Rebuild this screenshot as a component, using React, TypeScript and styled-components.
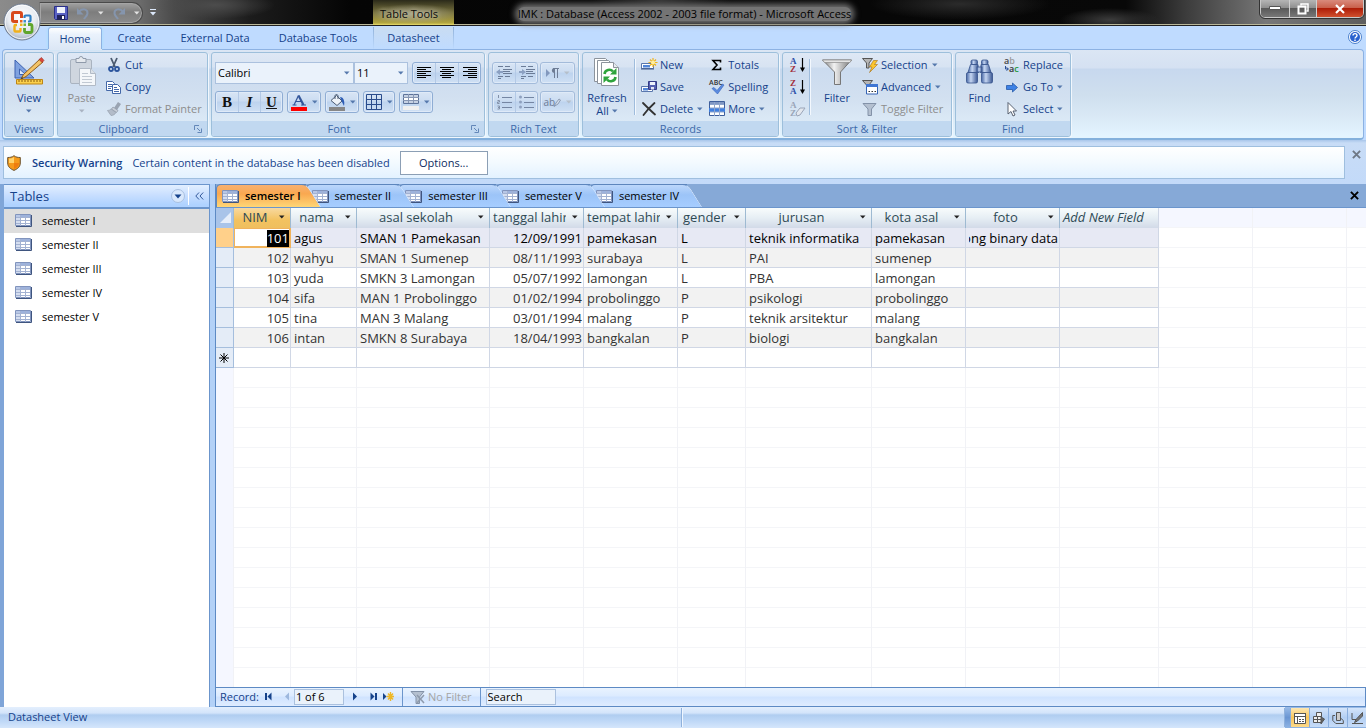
import React from "react";
import styled, { createGlobalStyle, css } from "styled-components";

const ink = "#15428b";
const faded = "#8d8d8d";

const GlobalStyle = createGlobalStyle`
  *, *::before, *::after { box-sizing: border-box; }
  html, body { margin: 0; padding: 0; }
  body, button, input, select { font-family: "Open Sans", "Noto Sans", sans-serif; font-size: 11px; line-height: 16px; }
  button { border: 0; background: none; padding: 0; margin: 0; color: ${ink}; cursor: default; white-space: nowrap; }
  svg { display: block; flex: none; overflow: visible; }
`;

/* ---------- window frame ---------- */

const Window = styled.div`
  display: flex;
  flex-direction: column;
  min-height: 100vh;
  background: #bfdbff;
  color: ${ink};
`;

const TitleBar = styled.header`
  position: relative;
  display: flex;
  height: 26px;
  border-bottom: 1px solid #222;
  box-shadow: inset 0 -1px 0 #b9b79a;
  background:
    radial-gradient(ellipse 60px 14px at 215px 5px, #4c4c4c, transparent),
    radial-gradient(ellipse 70px 16px at 660px 0, #303030, transparent),
    radial-gradient(ellipse 90px 16px at 960px 4px, #2b2b2b, transparent),
    radial-gradient(ellipse 50px 12px at 1110px 20px, #3c3c3c, transparent),
    linear-gradient(90deg, #8b8b8b 0, #6b6b6b 140px, #4a4a4a 175px, #1c1c1c 250px, #050505 350px, #080808 calc(100% - 240px), #3c3c3c calc(100% - 180px), #777 calc(100% - 100px), #5e5e5e 100%);
`;

const OfficeButton = styled.button`
  position: absolute;
  z-index: 3;
  left: 3px;
  top: 3px;
`;

const QuickAccess = styled.div`
  display: flex;
  align-items: center;
  gap: 8px;
  width: 104px;
  height: 22px;
  margin: 2px 0 0 39px;
  padding-left: 14px;
  border: 1px solid #4a4a4a;
  border-left-color: #777;
  border-radius: 0 11px 11px 0;
  background: linear-gradient(#a1a1a1, #7d7d7d 45%, #8c8c8c);
  box-shadow: inset 0 0 0 1px #a5a5a5;
`;

const Customize = styled.button`
  width: 20px;
  height: 24px;
  display: flex;
  align-items: center;
  justify-content: center;
`;

const ContextTitle = styled.div`
  position: absolute;
  left: 373px;
  top: 0;
  width: 81px;
  height: 25px;
  padding: 6px 0 0 7px;
  color: #0a0a0a;
  text-shadow: 0 0 5px #d6d2b8;
  background: radial-gradient(ellipse 44px 10px at 40px 14px, #a8a48a, transparent), linear-gradient(#2b2a1a, #77713c 50%, #b3a640 92%, #e9dd6d);
`;

const WindowTitle = styled.h1`
  position: absolute;
  left: 0;
  right: 0;
  top: 6px;
  margin: 0 0 0 3px;
  font-size: 11px;
  line-height: 16px;
  font-weight: 400;
  text-align: center;
  color: #000;
  pointer-events: none;
  span {
    display: inline-block;
    height: 14px;
    line-height: 14px;
    border-radius: 6px;
    background: #747474;
    box-shadow: 0 0 6px 3px #747474;
  }
`;

const WindowButtons = styled.div`
  display: flex;
  height: 18px;
  margin: 0 2px 0 auto;
  border: 1px solid #c9c9c9;
  border-top: 0;
  border-radius: 0 0 5px 5px;
  overflow: hidden;
  outline: 1px solid #333;
  z-index: 1;
`;

const WindowButton = styled.button<{ $w: number; $close?: boolean }>`
  display: flex;
  align-items: center;
  justify-content: center;
  width: ${(p) => p.$w}px;
  background: ${(p) => (p.$close ? "linear-gradient(#d98a7c, #c9604c 45%, #ae1d08 50%, #d0502d)" : "linear-gradient(#b5b5b5, #909090 45%, #5a5a5a 50%, #777)")};
  & + & { border-left: 1px solid #d0d0d0; }
`;

/* ---------- ribbon ---------- */

const Tabs = styled.nav`
  display: flex;
  align-items: flex-end;
  height: 23px;
  padding: 0 4px 0 48px;
`;

const RibbonTab = styled.button<{ $w: number; $active?: boolean; $context?: boolean }>`
  width: ${(p) => p.$w}px;
  height: 22px;
  position: relative;
  ${(p) =>
    p.$active &&
    css`
      z-index: 2;
      border: 1px solid #8db2e3;
      border-bottom: 0;
      border-radius: 3px 3px 0 0;
      background: linear-gradient(#fff, #eaf2fc 30%, #dce7f5);
      box-shadow: 0 1px 0 #dce7f5, 0 0 3px #9fe0ff;
    `}
  ${(p) =>
    p.$context &&
    css`
      border: solid;
      border-width: 0 1px;
      border-image: linear-gradient(#8fb0d8, #bfdbff) 1;
      background: linear-gradient(#c9dcf2, #bfdbff);
    `}
`;

const HelpButton = styled.button`
  margin: 0 0 5px auto;
`;

const Ribbon = styled.section`
  display: flex;
  gap: 3px;
  height: 91px;
  margin: 0 2px;
  padding: 2px 1px 3px;
  border: 1px solid #8db2e3;
  border-bottom: 2px solid #83b0dc;
  border-radius: 4px;
  background: linear-gradient(#dbe6f4 0, #d5e1f2 18px, #c7d8ee 19px, #cfdfee 45px, #d9e8f5 65px, #e3f4ff 86px);
`;

const GroupBox = styled.section<{ $w: number }>`
  display: flex;
  flex-direction: column;
  width: ${(p) => p.$w}px;
  height: 85px;
  flex: none;
  border: 1px solid #9dbfdb;
  border-radius: 3px;
  overflow: hidden;
  background: linear-gradient(#dee8f5 0, #d7e3f2 14px, #cbdbef 15px, #d2e0f0 45px, #dbe9f6 68px);
  box-shadow: 1px 1px 0 #f1f7fd;
`;

const GroupBody = styled.div`
  display: flex;
  height: 68px;
`;

const GroupLabel = styled.div`
  display: flex;
  align-items: center;
  height: 15px;
  background: #c1d8f0;
  color: #3e6aaa;
  span { flex: 1; text-align: center; line-height: 15px; }
  button { width: 18px; height: 15px; display: flex; align-items: center; justify-content: center; }
`;

const BigButton = styled.button<{ $w: number }>`
  display: flex;
  flex-direction: column;
  align-items: center;
  width: ${(p) => p.$w}px;
  padding-top: 4px;
  line-height: 13px;
  color: ${ink};
  &:disabled { color: ${faded}; }
  svg.big { margin-bottom: 5px; }
`;

const BigLine = styled.span`
  display: flex;
  align-items: center;
  gap: 3px;
  height: 13px;
`;

const Stack = styled.div<{ $left?: number }>`
  display: flex;
  flex-direction: column;
  align-items: flex-start;
  padding: 1px 0 0 ${(p) => p.$left || 0}px;
`;

const SmallButton = styled.button`
  display: flex;
  align-items: center;
  gap: 3px;
  height: 22px;
  &:disabled { color: ${faded}; }
  svg:last-child { margin-left: 1px; }
`;

const Divider = styled.div`
  width: 2px;
  height: 56px;
  margin: 6px 5px 0 3px;
  background: linear-gradient(90deg, #9fbcdc 50%, #f3f8fe 50%);
`;

const ToolRows = styled.div`
  display: flex;
  flex-direction: column;
  gap: 7px;
  padding: 9px 3px 0;
`;

const ToolRow = styled.div<{ $gap: number }>`
  display: flex;
  gap: ${(p) => p.$gap}px;
`;

const Pick = styled.label<{ $w: number }>`
  display: grid;
  width: ${(p) => p.$w}px;
  height: 22px;
  & + & { margin-left: -4px; }
  select, svg { grid-area: 1 / 1; }
  select {
    appearance: none;
    width: 100%;
    height: 22px;
    padding: 0 2px;
    border: 1px solid #abc1de;
    border-radius: 0;
    background: #eaf2fb;
    color: #000;
  }
  svg { justify-self: end; align-self: center; margin-right: 4px; pointer-events: none; }
`;

const ToolSet = styled.div<{ $dim?: boolean }>`
  display: flex;
  height: 22px;
  border: 1px solid ${(p) => (p.$dim ? "#a3bbda" : "#8fadd4")};
  border-radius: 3px;
  background: linear-gradient(#d8e5f5, #cbdcf1 45%, #bdd3ee 50%, #cfe0f4);
  box-shadow: inset 0 0 0 1px #dfeaf8;
`;

const Tool = styled.button<{ $w: number }>`
  display: flex;
  align-items: center;
  justify-content: center;
  gap: 5px;
  width: ${(p) => p.$w}px;
  height: 20px;
  & + & { border-left: 1px solid #b3c9e6; }
`;

/* ---------- message bar ---------- */

const MessageStrip = styled.div`
  display: flex;
  align-items: flex-start;
  gap: 4px;
  padding: 6px 3px 5px;
  background: linear-gradient(#a9c6ea, #c8dcf6 3px, #c3daf9);
`;

const MessageBar = styled.div`
  display: flex;
  align-items: center;
  flex: 1;
  height: 33px;
  padding-left: 3px;
  border: 1px solid #9fbfdf;
  background: linear-gradient(#fff, #f3faff 50%, #e3f2ff);
  strong { margin: 0 10px 0 11px; font-weight: 600; -webkit-text-stroke: 0 ${ink}; }
`;

const OptionsButton = styled.button`
  width: 88px;
  height: 24px;
  margin-left: 10px;
  border: 1px solid #8c9fb5;
  background: #fff;
  color: #0d2c5e;
`;

const CloseMessage = styled.button`
  padding: 4px 2px 4px 3px;
`;

/* ---------- workspace ---------- */

const Workspace = styled.main`
  display: flex;
  flex: 1;
  min-height: 0;
  background: #b3d1f7;
`;

const NavPane = styled.aside`
  display: flex;
  flex-direction: column;
  width: 210px;
  margin-right: 5px;
  border-left: 4px solid #7fa5d8;
  border-right: 1px solid #6b95cc;
  background: #fff;
`;

const NavHead = styled.div`
  display: flex;
  align-items: center;
  height: 25px;
  padding-left: 6px;
  border-top: 1px solid #6b95cc;
  border-bottom: 2px solid #6b95cc;
  background: linear-gradient(#e2efff, #c9dfff 45%, #afd2ff 90%);
  h2 { flex: 1; margin: 0; font-size: 13px; font-weight: 400; line-height: 18px; }
`;

const CollapseButton = styled.button`
  width: 21px;
  height: 18px;
  margin-left: 3px;
  display: flex;
  align-items: center;
  justify-content: center;
  border-left: 1px solid #fff;
`;

const NavList = styled.ul`
  list-style: none;
  margin: 0;
  padding: 0;
`;

const NavItem = styled.button<{ $on?: boolean }>`
  display: flex;
  align-items: center;
  gap: 10px;
  width: 100%;
  height: 24px;
  padding-left: 11px;
  color: #000;
  background: ${(p) => (p.$on ? "#dedede" : "transparent")};
  svg { margin-bottom: 2px; }
`;

const Document = styled.section`
  display: flex;
  flex-direction: column;
  flex: 1;
  min-width: 0;
  border-left: 1px solid #5d8ac4;
`;

const DocTabs = styled.div`
  display: flex;
  align-items: flex-end;
  height: 24px;
  padding-right: 7px;
  background: #86a9d7;
  border-bottom: 1px solid #6b95cc;
`;

const DocTab = styled.button<{ $on?: boolean; $z: number }>`
  position: relative;
  z-index: ${(p) => p.$z};
  display: flex;
  align-items: center;
  gap: 6px;
  height: 23px;
  padding: 0 ${(p) => (p.$on ? 5 : 8)}px 0 5px;
  border-top: 1px solid #5d86bd;
  border-left: 1px solid #5d86bd;
  border-radius: 5px 0 0 0;
  color: #000;
  font-weight: ${(p) => (p.$on ? 600 : 500)};
  background: ${(p) => (p.$on ? "linear-gradient(#f7b070, #f9a850 40%, #ffd676)" : "linear-gradient(#bcd7fb, #9cc4f8 45%, #a6cdff)")};
  &::after {
    content: "";
    position: absolute;
    z-index: -1;
    top: -1px;
    right: -8px;
    width: 18px;
    height: 23px;
    border-top: 1px solid #5d86bd;
    border-right: 1px solid #d6e8ff;
    border-radius: 0 6px 0 0;
    background: inherit;
    transform: skewX(32deg);
  }
`;

const CloseDoc = styled.button`
  margin: 0 0 7px auto;
`;

const columns = [
  { name: "NIM", w: 57 },
  { name: "nama", w: 66 },
  { name: "asal sekolah", w: 133 },
  { name: "tanggal lahir", w: 94 },
  { name: "tempat lahir", w: 94 },
  { name: "gender", w: 68 },
  { name: "jurusan", w: 126 },
  { name: "kota asal", w: 94 },
  { name: "foto", w: 94 },
];
const selectorWidth = 18;
const addFieldWidth = 99;

const ruleStops = [...columns.map((c) => c.w), addFieldWidth, 94, 94].reduce<number[]>(
  (acc, w) => [...acc, acc[acc.length - 1] + w],
  [selectorWidth]
);
const columnRules = ruleStops
  .map((x) => `linear-gradient(#f1f2f6, #f1f2f6) ${x - 1}px 0 / 1px 100% no-repeat`)
  .join(", ");

const Sheet = styled.div`
  flex: 1;
  min-height: 0;
  overflow: hidden;
  background:
    ${columnRules},
    linear-gradient(#f5f7ff, #f5f7ff) 0 0 / ${selectorWidth}px 100% no-repeat,
    linear-gradient(#f5f7ff, #f5f7ff) 0 0 / 100% 19px no-repeat,
    repeating-linear-gradient(#fff 0 19px, #f4f5f8 19px 20px);
`;

const Table = styled.table`
  table-layout: fixed;
  width: ${ruleStops[ruleStops.length - 3]}px;
  border-collapse: separate;
  border-spacing: 0;
  font-size: 13px;
  line-height: 18px;
  color: #333;
`;

const HeadCell = styled.th<{ $tone?: "active" | "corner" | "add" }>`
  height: 20px;
  padding: 0 0 2px 3px;
  border-right: 1px solid #9ebad2;
  font-weight: 400;
  text-align: left;
  font-style: ${(p) => (p.$tone === "add" ? "italic" : "normal")};
  color: #2e4a55;
  white-space: nowrap;
  overflow: hidden;
  background: ${(p) =>
    p.$tone === "active"
      ? "linear-gradient(#f8d9a0, #f3c260 60%, #efbf5f)"
      : p.$tone === "corner"
        ? "#a9c4e9"
        : "linear-gradient(#f8fcfc, #e6eef4 50%, #d2dae8)"};
  ${(p) => p.$tone === "add" && "border-right-color: #d0d7e5;"}
`;

const HeadInner = styled.div`
  display: flex;
  align-items: center;
  height: 18px;
  span { flex: 1; min-width: 0; overflow: hidden; text-align: center; }
  button { width: 17px; display: flex; justify-content: center; }
`;

const Row = styled.tr<{ $kind: "current" | "even" | "odd" | "new" }>`
  color: ${(p) => (p.$kind === "current" ? "#000" : "#333")};
  background: ${(p) => ({ current: "#e7e9f4", even: "#f2f2f2", odd: "#fff", new: "#fff" })[p.$kind]};
`;

const Cell = styled.td<{ $right?: boolean; $active?: boolean }>`
  height: 20px;
  padding: 0 1px 0 3px;
  border: solid #d0d7e5;
  border-width: 0 1px 1px 0;
  text-align: ${(p) => (p.$right ? "right" : "left")};
  white-space: nowrap;
  overflow: hidden;
  ${(p) => p.$active && "background: #fff; box-shadow: inset 0 0 0 1px #f0b35c; border-color: #f0b35c;"}
`;

const Clip = styled.div`
  display: flex;
  justify-content: flex-end;
  overflow: hidden;
`;

const Marked = styled.span`
  display: inline-block;
  height: 17px;
  line-height: 17px;
  background: #000;
  color: #fff;
`;

const Selector = styled.th<{ $on?: boolean }>`
  height: 20px;
  padding: 0 0 0 3px;
  border: solid #a5bedd;
  border-width: 0 1px 1px 0;
  background: ${(p) => (p.$on ? "#ffd08a" : "#e4ecf7")};
`;

/* ---------- record bar and status bar ---------- */

const RecordBar = styled.div`
  display: flex;
  align-items: center;
  height: 20px;
  padding: 0 0 1px 4px;
  border: 1px solid #5d8ac4;
  border-left: 0;
  background: linear-gradient(#e9f3ff, #dcebff 45%, #cfe3ff 50%, #dfecff);
`;

const RecordStep = styled.button<{ $w: number }>`
  display: flex;
  align-items: center;
  justify-content: center;
  width: ${(p) => p.$w}px;
  height: 16px;
`;

const RecordField = styled.input<{ $w: number }>`
  width: ${(p) => p.$w}px;
  height: 16px;
  padding: 0 1px;
  border: 1px solid #abc1de;
  background: #eaf2fb;
  color: #000;
  line-height: 14px;
  &::placeholder { color: #000; opacity: 1; }
`;

const FilterState = styled.button`
  display: flex;
  align-items: center;
  gap: 2px;
  height: 18px;
  margin: 0 5px 0 4px;
  padding: 0 8px 0 7px;
  border: solid #6b95cc;
  border-width: 0 1px;
  &:disabled { color: #a4a4a4; }
`;

const StatusBar = styled.footer`
  display: flex;
  align-items: center;
  height: 21px;
  padding-left: 8px;
  background: linear-gradient(#e4effd, #d3e4fa 6px, #b0cdf0 8px, #bfd8f7 14px, #d5e6fb);
`;

const StatusText = styled.span`
  flex: 1;
  padding-bottom: 2px;
`;

const StatusPane = styled.div`
  flex: 1 1 0;
  max-width: 604px;
  height: 19px;
  border: solid #8fb1dc;
  border-width: 0 1px;
  box-shadow: inset 1px 0 0 #eff6ff;
`;

const ViewSwitch = styled.div`
  display: flex;
  height: 21px;
  padding: 1px 0 0 5px;
  background: linear-gradient(#9abce8, #6a96d3 50%, #8fb4e4);
`;

const ViewButton = styled.button<{ $on?: boolean }>`
  display: flex;
  align-items: center;
  justify-content: center;
  width: 19px;
  height: 19px;
  border-left: 1px solid #8aaedd;
  background: ${(p) => (p.$on ? "linear-gradient(#fde7b4, #f9c65b 50%, #fbd98b)" : "linear-gradient(#d5e5fa, #b3cff3 50%, #c7dcf8)")};
`;

/* ---------- icons ---------- */

const Caret = ({ color = "#5578ac" }: { color?: string }) => (
  <svg width="6" height="4" viewBox="0 0 6 4"><path d="M0 .5h5.500L2.800 3.500z" fill={color} /></svg>
);

const OfficeLogo = () => (
  <svg width="38" height="38" viewBox="0 0 38 38">
    <defs>
      <radialGradient id="orb" cx="50%" cy="35%" r="65%">
        <stop offset="0" stopColor="#fff" /><stop offset=".6" stopColor="#e7ebf1" /><stop offset="1" stopColor="#a9b4c4" />
      </radialGradient>
    </defs>
    <circle cx="19" cy="19" r="18" fill="url(#orb)" stroke="#6f7c90" />
    <circle cx="19" cy="19" r="16.8" fill="none" stroke="#fff" strokeOpacity=".8" />
    <g fill="none">
      <path d="M15 18.500H11a1.500 1.500 0 01-1.500-1.500V11A1.500 1.500 0 0111 9.500h6a1.500 1.500 0 011.500 1.500v4" stroke="#d8491c" strokeWidth="3" />
      <path d="M21.500 15v-1.500a1 1 0 011-1h4a1 1 0 011 1v4a1 1 0 01-1 1H25" stroke="#2f7fc4" strokeWidth="2.200" />
      <path d="M14 22h-1.500a1 1 0 00-1 1v4.500a1 1 0 001 1h4a1 1 0 001-1V25" stroke="#f0b01c" strokeWidth="2.400" />
      <path d="M25 21.500h2.500A1.500 1.500 0 0129 23v5a1.500 1.500 0 01-1.500 1.500H23a1.500 1.500 0 01-1.500-1.500v-3" stroke="#5fa52c" strokeWidth="2.800" />
    </g>
    <path d="M17 17h2.500v2.500H17z" fill="#e8641e" /><path d="M20.500 17H23v2.500h-2.500z" fill="#3f8fd0" />
    <path d="M17 20.500h2.500V23H17z" fill="#f2b61f" /><path d="M20.500 20.500H23V23h-2.500z" fill="#78b83a" />
  </svg>
);

const SaveIcon = ({ size = 14 }: { size?: number }) => (
  <svg width={size} height={size} viewBox="0 0 14 14">
    <path d="M.5.500h13v13h-12l-1-1z" fill="#5a62c4" stroke="#2a2f86" />
    <path d="M3 1h8v6H3z" fill="#eef2fb" /><path d="M3 9h8v5H3z" fill="#20235c" /><path d="M8 10h2v3H8z" fill="#fff" />
  </svg>
);

const Curl = ({ flip }: { flip?: boolean }) => (
  <svg width="14" height="14" viewBox="0 0 14 14">
    <g transform={flip ? "matrix(-1 0 0 1 14 0)" : undefined}>
      <path d="M3 6C6 1.500 12 3 11.500 7.500 11 10.500 8.500 12 8 13" fill="none" stroke="#8595ad" strokeWidth="2" />
      <path d="M1 2v6.500h6.500z" fill="#8595ad" />
    </g>
  </svg>
);

const ViewIcon = () => (
  <svg className="big" width="32" height="29" viewBox="0 0 32 29">
    <path d="M2 3v18h19z" fill="#7fa2e0" stroke="#3c61b0" /><path d="M6.500 12v5.500h6z" fill="#dce8fa" stroke="#3c61b0" />
    <path d="M27 2l3 3L13 19.500l-5 2.500 2.500-4.500z" fill="#f3c469" stroke="#8f5d1a" />
    <path d="M26 2.500L28.500.5l2.500 3-2 2z" fill="#d9473c" stroke="#9b2f28" strokeWidth=".6" />
    <path d="M8 22l1-2 1.200 1.200z" fill="#333" />
    <path d="M3.500 22.500h26v4.500h-26z" fill="#fbd04c" stroke="#bd8515" />
    <path d="M6 23v2M9 23v2M12 23v2M15 23v2M18 23v2M21 23v2M24 23v2M27 23v2" stroke="#8b5e0c" />
  </svg>
);

const PasteIcon = () => (
  <svg className="big" width="32" height="29" viewBox="0 0 32 29">
    <rect x="4.500" y="2.500" width="21" height="24" rx="1.500" fill="#cfd6df" stroke="#a9b3c0" />
    <path d="M10 1.500h3a2 2 0 014 0h3v4H10z" fill="#e5e9ee" stroke="#8f9aaa" />
    <path d="M13.500 11.500h11l5 5v12h-16z" fill="#f4f7fa" stroke="#b1bac6" /><path d="M24.500 11.500v5h5" fill="#dbe1e8" stroke="#b1bac6" />
    <path d="M16 16.500h6M16 19.500h10M16 22.500h10M16 25.500h10" stroke="#c1c9d3" />
  </svg>
);

const CutIcon = () => (
  <svg width="16" height="16" viewBox="0 0 16 16">
    <path d="M5 1l4 9M11 1L7 10" stroke="#4b5a70" strokeWidth="1.800" />
    <circle cx="5" cy="12" r="2" fill="none" stroke="#2c559d" strokeWidth="1.800" /><circle cx="11" cy="12" r="2" fill="none" stroke="#2c559d" strokeWidth="1.800" />
  </svg>
);

const CopyIcon = () => (
  <svg width="16" height="16" viewBox="0 0 16 16" stroke="#4468a8">
    <path d="M.5 2.500h6l2 2v7h-8z" fill="#fff" /><path d="M2 5.500h4M2 7.500h4M2 9.500h3" />
    <path d="M6.500 5.500h5l3 3v6h-8z" fill="#fff" /><path d="M8 8.500h3M8 10.500h5M8 12.500h5" />
  </svg>
);

const BrushIcon = () => (
  <svg width="16" height="16" viewBox="0 0 16 16">
    <path d="M12 1l3 2-4 6-3-2z" fill="#9aa4b2" /><path d="M7 6l5 3.500-1.500 2L5.500 8z" fill="#c9cfd8" stroke="#8d97a5" strokeWidth=".7" />
    <path d="M5 8l5 3.500c-1 2-3 3-5 3L1.500 9.500c1.500 0 2.500-.5 3.500-1.500z" fill="#b3bcc9" stroke="#939dab" strokeWidth=".7" />
  </svg>
);

const Launcher = () => (
  <svg width="8" height="8" viewBox="0 0 8 8" fill="none" stroke="#6387b8"><path d="M.5 5V.5H5" /><path d="M3 3l3 3M7.500 3.500v4h-4" /></svg>
);

const AlignIcon = ({ dir }: { dir: "left" | "center" | "right" }) => {
  const x = { left: 0, center: 2, right: 5 }[dir];
  return (
    <svg width="14" height="12" viewBox="0 0 14 12" stroke="#000">
      <path d={`M0 .5h14M${x} 2.500h9M0 4.500h14M${x} 6.500h9M0 8.500h14M${x} 10.500h9`} />
    </svg>
  );
};

const Glyph = styled.span<{ $as: "b" | "i" | "u" }>`
  font-family: "Liberation Serif", serif;
  font-size: 15px;
  line-height: 18px;
  color: #111;
  font-weight: 700;
  font-style: ${(p) => (p.$as === "i" ? "italic" : "normal")};
  text-decoration: ${(p) => (p.$as === "u" ? "underline" : "none")};
`;

const FontColorIcon = () => (
  <svg width="16" height="17" viewBox="0 0 16 17">
    <path d="M3 11L7.500 1.500" fill="none" stroke="#33569a" strokeWidth="1.200" />
    <path d="M7.500 1.500l5 9.500" fill="none" stroke="#33569a" strokeWidth="2.200" />
    <path d="M4.500 7.500h6M1.500 11h4M10 11h5" fill="none" stroke="#33569a" strokeWidth="1.200" /><path d="M0 13h16v4H0z" fill="#fe0000" />
  </svg>
);

const FillIcon = () => (
  <svg width="16" height="17" viewBox="0 0 16 17">
    <path d="M7.500 1.500L13 7l-5 4.500L2 6.500z" fill="#eef3f9" stroke="#4a5a72" /><path d="M6 5V2c0-2 3-2 3 0v3" fill="none" stroke="#4a5a72" />
    <path d="M11 3c3 0 5 3 4 9l-2-4z" fill="#2d5db5" /><path d="M0 13h16v4H0z" fill="#878787" />
  </svg>
);

const GridLinesIcon = () => (
  <svg width="16" height="16" viewBox="0 0 16 16" fill="none" stroke="#2a4c8c"><path d="M.5.5h15v15H.5zM5.500 0v16M10.500 0v16M0 5.500h16M0 10.500h16" /></svg>
);

const AltRowIcon = () => (
  <svg width="16" height="16" viewBox="0 0 16 16">
    <path d="M.5.5h15v9H.5z" fill="#fff" stroke="#5c7299" /><path d="M1 1h14v2H1zM1 6h14v3H1z" fill="#c6d1e3" /><path d="M5.500 0v9M10.500 0v9M0 3.500h16M0 6.500h16" stroke="#8797b4" /><path d="M0 12h16v4H0z" fill="#f0f0f0" />
  </svg>
);

const IndentIcon = ({ out }: { out?: boolean }) => (
  <svg width="16" height="14" viewBox="0 0 16 14">
    <path d="M2 .5h5M9 .5h5M7 3.500h9M7 5.500h7M7 7.500h9M2 10.500h5M9 10.500h5M2 12.500h3" stroke="#6b7c97" />
    <path d={out ? "M0 6l4-3v2h3v2H4v2z" : "M7 6L3 3v2H0v2h3v2z"} fill="#8ba0c2" />
  </svg>
);

const ListIcon = ({ num }: { num?: boolean }) => (
  <svg width="15" height="14" viewBox="0 0 15 14">
    <path d="M5 2.500h10M5 7.500h10M5 12.500h10" stroke="#7586a3" />
    {num ? <path d="M1.500 0v3M.5 5.500h2v1.500H.5v1.500h2M.5 11h2v3h-2M1 12.500h1.500" stroke="#8290a8" fill="none" /> : <g fill="#8ea0bf"><circle cx="1.500" cy="2" r="1.500" /><circle cx="1.500" cy="7" r="1.500" /><circle cx="1.500" cy="12" r="1.500" /></g>}
  </svg>
);

const DirectionIcon = () => (
  <svg width="13" height="10" viewBox="0 0 13 10"><path d="M0 1l4 4-4 4z" fill="#8298bd" /><path d="M8.500 10V.5M11.500 10V.5M7 .5h6" stroke="#6d7c95" /><path d="M8.500 0C5 0 5 5 8.500 5z" fill="#6d7c95" /></svg>
);

const HighlightText = styled.span`
  display: flex;
  width: 17px;
  color: #6d7c95;
  font-size: 10px;
  line-height: 12px;
  svg { margin: 2px 0 0 -2px; }
`;

const RefreshIcon = () => (
  <svg className="big" width="28" height="29" viewBox="0 0 28 29" stroke="#8c939c" fill="#fff">
    <path d="M1.500 1.500h11l5 5v18h-16z" /><path d="M4.500 3.500h11l5 5v18h-16z" />
    <path d="M8.500 5.500h12l5 5v18h-17z" /><path d="M20.500 5.500v5h5" fill="#e6e9ee" />
    <path d="M11.500 17c.5-4.500 6-5.500 8.500-2.500M22.500 20c-.5 4.500-6 5.500-8.500 2.500" fill="none" stroke="#2ea43c" strokeWidth="2.600" />
    <path d="M23.500 11V17.500H17zM10.500 26v-6.500H17z" fill="#2ea43c" stroke="none" />
  </svg>
);

const NewIcon = () => (
  <svg width="16" height="16" viewBox="0 0 16 16">
    <path d="M.5 6.500h12v5H.5z" fill="#fff" stroke="#5a77ad" /><path d="M2 8h7v2.500H2z" fill="#5286d8" /><path d="M0 12h13" stroke="#3d5685" />
    <path d="M12 1v9M7.500 5.500h9M9 2.500l6 6M15 2.500l-6 6" stroke="#f0b41c" strokeWidth="1.200" /><circle cx="12" cy="5.500" r="2" fill="#fff0a0" />
  </svg>
);

const SaveRecordIcon = () => (
  <svg width="16" height="16" viewBox="0 0 16 16">
    <path d="M.5 7.500h11v5H.5z" fill="#fff" stroke="#5a77ad" /><path d="M2 9h5v2.500H2z" fill="#5286d8" />
    <path d="M7.500 2.500h8v8h-8z" fill="#5560b0" stroke="#343a86" /><path d="M9 3h5v3H9z" fill="#eef2fb" /><path d="M10 8h3v2.500h-3z" fill="#e3e5f5" />
  </svg>
);

const DeleteIcon = () => (
  <svg width="16" height="16" viewBox="0 0 16 16"><path d="M2 2c4 4 8 8 12 11.500M13.500 2C9 6 6 9 2.500 14" fill="none" stroke="#333" strokeWidth="1.800" strokeLinecap="round" /></svg>
);

const SumIcon = () => (
  <svg width="16" height="16" viewBox="0 0 16 16"><path d="M11.500 5.500V3.500H4L8 8l-4 4.500h7.500v-2" fill="none" stroke="#000" strokeWidth="1.600" /></svg>
);

const SpellIcon = () => (
  <svg width="16" height="16" viewBox="0 0 16 16">
    <text x="0" y="6" fontSize="7" fontWeight="600" fontFamily="Open Sans, sans-serif" fill="#333">ABC</text>
    <path d="M3 9.500l2-1 3 3 5.500-6.500 1.500 1-6.500 9z" fill="#5b8be0" stroke="#3461b8" strokeWidth=".6" />
  </svg>
);

const MoreIcon = () => (
  <svg width="16" height="16" viewBox="0 0 16 16">
    <path d="M.5.500h15v14H.5z" fill="#fff" stroke="#3f5f9c" /><path d="M1 1h14v2.500H1z" fill="#7f97c3" /><path d="M0 7h16v4H0z" fill="#3f7fe0" />
    <path d="M5.500 1v14M10.500 1v14M1 3.500h14M1 7h14M1 11h14" stroke="#8fa5cc" />
  </svg>
);

const SortIcon = ({ top, bottom, plain }: { top: string; bottom: string; plain?: boolean }) => (
  <svg width="16" height="16" viewBox="0 0 16 16" fontFamily="Liberation Serif, serif" fontSize="9" fontWeight="700">
    <text x="0" y="7" fill={plain ? "#9aa5b8" : top === "A" ? "#2c4fa8" : "#a2303c"}>{top}</text>
    <text x="0" y="15" fill={plain ? "#9aa5b8" : bottom === "A" ? "#2c4fa8" : "#a2303c"}>{bottom}</text>
    {plain ? <path d="M6 12l4-5h5l-5 7-3 1z" fill="#e3e7ee" stroke="#9aa5b8" /> : <><path d="M12.500 1v11" stroke="#000" strokeWidth="1.200" /><path d="M10 10.500h5L12.500 15z" fill="#000" /></>}
  </svg>
);

const FunnelIcon = () => (
  <svg className="big" width="32" height="29" viewBox="0 0 32 29">
    <defs><linearGradient id="steel"><stop offset="0" stopColor="#777" /><stop offset=".4" stopColor="#f2f2f2" /><stop offset="1" stopColor="#777" /></linearGradient></defs>
    <path d="M1.500 3h29L19.500 15v12.500h-6V15z" fill="url(#steel)" stroke="#777" /><path d="M1.500 3h29l-1.500 2.500H3.500z" fill="#e4e4e4" stroke="#8d8d8d" strokeWidth=".7" />
  </svg>
);

const MiniFunnel = ({ mark }: { mark?: "bolt" | "form" | "cross" }) => (
  <svg width="16" height="16" viewBox="0 0 16 16">
    {mark === "bolt" || mark === "form" ? (
      <path d="M.5 1.500h10L7 6v5H4.500V6z" fill="#b5b5b5" stroke="#555" />
    ) : (
      <path d="M1 2.500h13L9.500 8v6.500H6V8z" fill="#b4c0d0" stroke="#8392a8" />
    )}
    {mark === "bolt" && <path d="M11.500 3.500h4l-3 4h3l-8 8 2.500-5.500H7.500z" fill="#fcc62e" stroke="#a86f10" strokeWidth=".6" />}
    {mark === "form" && <><path d="M4.500 5.500h11v9.500h-11z" fill="#fff" stroke="#3463b4" /><path d="M4 5h12v3H4z" fill="#3f76d4" /><path d="M6.500 12.500H8M9.500 12.500H11M12.500 12.500H14" stroke="#333" /></>}
    {mark === "cross" && <path d="M7 6l7 8M14 6l-7 8" stroke="#8f9bad" strokeWidth="1.500" />}
  </svg>
);

const BinocularsIcon = () => (
  <svg className="big" width="30" height="29" viewBox="0 0 30 29">
    <defs><linearGradient id="lens"><stop offset="0" stopColor="#4767a5" /><stop offset=".4" stopColor="#c5d6f2" /><stop offset="1" stopColor="#3a5793" /></linearGradient></defs>
    <g fill="url(#lens)" stroke="#34508a" strokeWidth=".8">
      <rect x="6" y="3" width="6.500" height="4.500" rx="1.500" /><rect x="16.500" y="3" width="6.500" height="4.500" rx="1.500" />
      <path d="M5.500 7.500h7.500l.5 8H3z" /><path d="M16 7.500h7.500l2.500 8H15.500z" /><rect x="12" y="10" width="5" height="5" />
      <rect x="1.500" y="15.500" width="11" height="10.500" rx="1.500" /><rect x="16.500" y="15.500" width="11" height="10.500" rx="1.500" />
    </g>
  </svg>
);

const ReplaceIcon = () => (
  <svg width="16" height="16" viewBox="0 0 16 16" fontFamily="Open Sans, sans-serif" fontSize="9" fontWeight="600">
    <text x="0" y="7" fill="#444">a<tspan fill="#9a9a9a">b</tspan></text>
    <text x="5" y="15" fill="#333">a<tspan fill="#24993a">c</tspan></text>
    <path d="M1.500 9v3h2.500M2.500 10.500L4.500 12l-2 1.500" fill="none" stroke="#2b4f95" />
  </svg>
);

const GoToIcon = () => (
  <svg width="16" height="16" viewBox="0 0 16 16"><path d="M2.500 6.500h6V4l5 4.500-5 4.500v-2.500h-6z" fill="#3d82e6" stroke="#2659a8" strokeWidth=".8" /></svg>
);

const PointerIcon = () => (
  <svg width="16" height="16" viewBox="0 0 16 16"><path d="M4 1.500l8.500 8.500H9l2 4-2 1-2-4.500L4 13z" fill="#fff" stroke="#4a5262" strokeWidth=".9" /></svg>
);

const ShieldIcon = () => (
  <svg width="14" height="16" viewBox="0 0 14 16">
    <path d="M7 .7c2 1.600 4 1.800 6.300 1.800V8c0 4-3 6-6.300 7.400C3.700 14 .7 12 .7 8V2.500C3 2.500 5 2.300 7 .7z" fill="#f59a1a" stroke="#6b5330" />
    <path d="M2 3.500c2 0 3.500-.5 5-1.500v6H2z" fill="#ffd36b" /><path d="M7 8h5c0 3-2.500 4.800-5 6z" fill="#ef7d0e" />
  </svg>
);

const SheetIcon = () => (
  <svg width="17" height="13" viewBox="0 0 17 13">
    <path d="M.5.5h15v11H.5z" fill="#fff" stroke="#8194bd" /><path d="M1 1h14v2H1z" fill="#9db2dc" /><path d="M1 1h4v10H1z" fill="#c3d0ea" fillOpacity=".7" />
    <path d="M5.500 1v11M10.500 1v11M1 3.500h14M1 6.500h14M1 9.500h14" stroke="#a3b2d2" /><path d="M1 12.500h15.500V1" fill="none" stroke="#3f557f" />
  </svg>
);

const Cross = ({ color, size }: { color: string; size: number }) => (
  <svg width={size} height={size} viewBox="0 0 8 8"><path d="M.8.8l6.400 6.400M7.200.8L.8 7.200" stroke={color} strokeWidth="1.700" /></svg>
);

const HelpIcon = () => (
  <svg width="14" height="14" viewBox="0 0 14 14">
    <circle cx="7" cy="7" r="6.500" fill="#fff" stroke="#4a80cc" /><circle cx="7" cy="7" r="5" fill="#2a62cf" />
    <path d="M5 5.500c0-2.500 4-2.500 4 0C9 7 7 7 7 8.500M7 9.500V11" fill="none" stroke="#fff" strokeWidth="1.400" />
  </svg>
);

const StepIcon = ({ kind }: { kind: "first" | "prev" | "next" | "last" | "new" }) => (
  <svg width={kind === "new" ? 11 : 8} height="9" viewBox={kind === "new" ? "0 0 11 9" : "0 0 8 9"}>
    {kind === "first" && <path d="M0 1h2v7H0zM6.500.500v8l-4-4z" fill={ink} />}
    {kind === "prev" && <path d="M6 .5v8l-4-4z" fill="#9db8de" />}
    {kind === "next" && <path d="M2 .5v8l4-4z" fill={ink} />}
    {kind === "last" && <path d="M6 1h2v7H6zM1.500.500v8l4-4z" fill={ink} />}
    {kind === "new" && <><path d="M0 1v7l3.500-3.500z" fill={ink} /><path d="M7.500 0v9M3.500 4.500H11M5 1.500l5 6M10 1.500l-5 6" stroke="#efb827" strokeWidth="1.400" /></>}
  </svg>
);

const ViewGlyph = ({ kind }: { kind: number }) => (
  <svg width="12" height="12" viewBox="0 0 12 12" fill="none" stroke="#555">
    {kind === 0 && <><path d="M.5 1.500h11v10H.5z" fill="#fff" /><path d="M0 1.500h12M0 4.500h12M3.500 4v8M5 7.500h2M8 7.500h2M5 9.500h2M8 9.500h2" /></>}
    {kind === 1 && <><path d="M3.500.500h5v4h-5zM.5 4.500h8v6H.5zM4.500 4v7M0 7.500h9" fill="#eee" /><path d="M8 5l3.500 2-3.500 5z" fill="#666" /></>}
    {kind === 2 && <><path d="M4.500.500h4v8h-4z" fill="#ccc" /><path d="M3 3.500H.8v5l3 3h7.500V8.500L8.500 6" /></>}
    {kind === 3 && <><path d="M1 1v6.500h6M1 11.500h11" /><path d="M11.500.500L5 7.500l-1.500 3 3-1.500L11.500 4z" fill="#777" /></>}
  </svg>
);

/* ---------- composition ---------- */

const Group = ({ w, label, launcher, children }: { w: number; label: string; launcher?: boolean; children: React.ReactNode }) => (
  <GroupBox $w={w} aria-label={label}>
    <GroupBody>{children}</GroupBody>
    <GroupLabel>
      <span>{label}</span>
      {launcher && <button aria-label={`${label} options`}><Launcher /></button>}
    </GroupLabel>
  </GroupBox>
);

const Small = ({ icon, text, menu, disabled }: { icon: React.ReactNode; text: string; menu?: boolean; disabled?: boolean }) => (
  <SmallButton disabled={disabled}>
    {icon}
    <span>{text}</span>
    {menu && <Caret />}
  </SmallButton>
);

const tables = ["semester I", "semester II", "semester III", "semester IV", "semester V"];
const openTabs = ["semester I", "semester II", "semester III", "semester V", "semester IV"];

const records = [
  ["101", "agus", "SMAN 1 Pamekasan", "12/09/1991", "pamekasan", "L", "teknik informatika", "pamekasan", "Long binary data"],
  ["102", "wahyu", "SMAN 1 Sumenep", "08/11/1993", "surabaya", "L", "PAI", "sumenep", ""],
  ["103", "yuda", "SMKN 3 Lamongan", "05/07/1992", "lamongan", "L", "PBA", "lamongan", ""],
  ["104", "sifa", "MAN 1 Probolinggo", "01/02/1994", "probolinggo", "P", "psikologi", "probolinggo", ""],
  ["105", "tina", "MAN 3 Malang", "03/01/1994", "malang", "P", "teknik arsitektur", "malang", ""],
  ["106", "intan", "SMKN 8 Surabaya", "18/04/1993", "bangkalan", "P", "biologi", "bangkalan", ""],
];

const RibbonGroups = () => (
  <Ribbon>
    <Group w={50} label="Views">
      <BigButton $w={48}><ViewIcon /><BigLine>View</BigLine><BigLine><Caret /></BigLine></BigButton>
    </Group>
    <Group w={151} label="Clipboard" launcher>
      <BigButton $w={47} disabled><PasteIcon /><BigLine>Paste</BigLine><BigLine><Caret color="#a9b3c2" /></BigLine></BigButton>
      <Stack $left={1}>
        <Small icon={<CutIcon />} text="Cut" />
        <Small icon={<CopyIcon />} text="Copy" />
        <Small icon={<BrushIcon />} text="Format Painter" disabled />
      </Stack>
    </Group>
    <Group w={274} label="Font" launcher>
      <ToolRows>
        <ToolRow $gap={4}>
          <Pick $w={139}>
            <select aria-label="Font name" defaultValue="Calibri"><option>Calibri</option></select>
            <Caret />
          </Pick>
          <Pick $w={54}>
            <select aria-label="Font size" defaultValue="11"><option>11</option></select>
            <Caret />
          </Pick>
          <ToolSet>
            <Tool $w={22} aria-label="Align left"><AlignIcon dir="left" /></Tool>
            <Tool $w={23} aria-label="Center"><AlignIcon dir="center" /></Tool>
            <Tool $w={22} aria-label="Align right"><AlignIcon dir="right" /></Tool>
          </ToolSet>
        </ToolRow>
        <ToolRow $gap={4}>
          <ToolSet>
            <Tool $w={22}><Glyph $as="b">B</Glyph></Tool>
            <Tool $w={22}><Glyph $as="i">I</Glyph></Tool>
            <Tool $w={22}><Glyph $as="u">U</Glyph></Tool>
          </ToolSet>
          <ToolSet><Tool $w={32} aria-label="Font color"><FontColorIcon /><Caret /></Tool></ToolSet>
          <ToolSet><Tool $w={32} aria-label="Fill color"><FillIcon /><Caret /></Tool></ToolSet>
          <ToolSet><Tool $w={30} aria-label="Gridlines"><GridLinesIcon /><Caret /></Tool></ToolSet>
          <ToolSet><Tool $w={32} aria-label="Alternate fill color"><AltRowIcon /><Caret /></Tool></ToolSet>
        </ToolRow>
      </ToolRows>
    </Group>
    <Group w={91} label="Rich Text">
      <ToolRows>
        <ToolRow $gap={2}>
          <ToolSet $dim><Tool $w={22} aria-label="Decrease indent"><IndentIcon out /></Tool><Tool $w={22} aria-label="Increase indent"><IndentIcon /></Tool></ToolSet>
          <ToolSet $dim><Tool $w={33} aria-label="Text direction"><DirectionIcon /><Caret color="#b5bfca" /></Tool></ToolSet>
        </ToolRow>
        <ToolRow $gap={2}>
          <ToolSet $dim><Tool $w={22} aria-label="Numbering"><ListIcon num /></Tool><Tool $w={22} aria-label="Bullets"><ListIcon /></Tool></ToolSet>
          <ToolSet $dim>
            <Tool $w={33} aria-label="Highlight color">
              <HighlightText>ab<svg width="8" height="9" viewBox="0 0 8 9"><path d="M1 8.500L3 5l3-4 1.500 1L5 6z" fill="#d5dfec" stroke="#7c8ba5" strokeWidth=".8" /></svg></HighlightText>
              <Caret color="#b5bfca" />
            </Tool>
          </ToolSet>
        </ToolRow>
      </ToolRows>
    </Group>
    <Group w={197} label="Records">
      <BigButton $w={48}><RefreshIcon /><BigLine>Refresh</BigLine><BigLine>All <Caret /></BigLine></BigButton>
      <Divider />
      <Stack>
        <Small icon={<NewIcon />} text="New" />
        <Small icon={<SaveRecordIcon />} text="Save" />
        <Small icon={<DeleteIcon />} text="Delete" menu />
      </Stack>
      <Stack $left={6}>
        <Small icon={<SumIcon />} text="Totals" />
        <Small icon={<SpellIcon />} text="Spelling" />
        <Small icon={<MoreIcon />} text="More" menu />
      </Stack>
    </Group>
    <Group w={170} label="Sort & Filter">
      <Stack $left={6}>
        <SmallButton aria-label="Sort ascending"><SortIcon top="A" bottom="Z" /></SmallButton>
        <SmallButton aria-label="Sort descending"><SortIcon top="Z" bottom="A" /></SmallButton>
        <SmallButton aria-label="Clear sorts" disabled><SortIcon top="A" bottom="Z" plain /></SmallButton>
      </Stack>
      <Divider />
      <BigButton $w={42}><FunnelIcon /><BigLine>Filter</BigLine></BigButton>
      <Stack $left={4}>
        <Small icon={<MiniFunnel mark="bolt" />} text="Selection" menu />
        <Small icon={<MiniFunnel mark="form" />} text="Advanced" menu />
        <Small icon={<MiniFunnel />} text="Toggle Filter" disabled />
      </Stack>
    </Group>
    <Group w={116} label="Find">
      <BigButton $w={47}><BinocularsIcon /><BigLine>Find</BigLine></BigButton>
      <Stack $left={1}>
        <Small icon={<ReplaceIcon />} text="Replace" />
        <Small icon={<GoToIcon />} text="Go To" menu />
        <Small icon={<PointerIcon />} text="Select" menu />
      </Stack>
    </Group>
  </Ribbon>
);

const Datasheet = () => (
  <Sheet>
    <Table>
      <colgroup>
        <col style={{ width: selectorWidth }} />
        {columns.map((c) => <col key={c.name} style={{ width: c.w }} />)}
        <col style={{ width: addFieldWidth }} />
      </colgroup>
      <thead>
        <tr>
          <HeadCell $tone="corner" aria-label="Select all">
            <svg width="12" height="12" viewBox="0 0 12 12"><path d="M12 1v11H1z" fill="#e6eefa" /></svg>
          </HeadCell>
          {columns.map((c, i) => (
            <HeadCell key={c.name} $tone={i === 0 ? "active" : undefined}>
              <HeadInner>
                <span>{c.name}</span>
                <button aria-label={`Filter ${c.name}`}><Caret color="#222" /></button>
              </HeadInner>
            </HeadCell>
          ))}
          <HeadCell $tone="add">Add New Field</HeadCell>
        </tr>
      </thead>
      <tbody>
        {records.map((r, n) => (
          <Row key={r[0]} $kind={n === 0 ? "current" : n % 2 ? "even" : "odd"}>
            <Selector $on={n === 0} />
            {r.map((v, i) => (
              <Cell key={i} $right={i === 0 || i === 3} $active={n === 0 && i === 0}>
                {n === 0 && i === 0 ? <Marked>{v}</Marked> : i === 8 ? <Clip>{v}</Clip> : v}
              </Cell>
            ))}
            <Cell />
          </Row>
        ))}
        <Row $kind="new">
          <Selector aria-label="New record">
            <svg width="10" height="10" viewBox="0 0 10 10"><path d="M5 0v10M0 5h10M1.500 1.500l7 7M8.500 1.500l-7 7" stroke="#000" /></svg>
          </Selector>
          {columns.map((c) => <Cell key={c.name} />)}
          <Cell />
        </Row>
      </tbody>
    </Table>
  </Sheet>
);

export default function App() {
  return (
    <Window>
      <GlobalStyle />
      <TitleBar>
        <OfficeButton aria-label="Office menu"><OfficeLogo /></OfficeButton>
        <QuickAccess>
          <button aria-label="Save"><SaveIcon /></button>
          <button aria-label="Undo"><Curl /></button>
          <button aria-label="Undo list"><Caret color="#e4e4e4" /></button>
          <button aria-label="Redo"><Curl flip /></button>
          <button aria-label="Redo list"><Caret color="#e4e4e4" /></button>
        </QuickAccess>
        <Customize aria-label="Customize toolbar">
          <svg width="6" height="7" viewBox="0 0 6 7"><path d="M0 .5h6" stroke="#dce8fa" /><path d="M0 3h6L3 6.500z" fill="#dce8fa" /></svg>
        </Customize>
        <ContextTitle>Table Tools</ContextTitle>
        <WindowTitle><span>IMK : Database (Access 2002 - 2003 file format) - Microsoft Access</span></WindowTitle>
        <WindowButtons>
          <WindowButton $w={28} aria-label="Minimize">
            <svg width="12" height="5" viewBox="0 0 12 5"><path d="M.5.500h11v3H.5z" fill="#fff" stroke="#555" /></svg>
          </WindowButton>
          <WindowButton $w={27} aria-label="Restore">
            <svg width="12" height="12" viewBox="0 0 12 12" fill="none" stroke="#fff" strokeWidth="1.500"><path d="M4 2.500V1h7v7H9.500" /><path d="M1.500 3.500h7v7h-7z" strokeWidth="2" /></svg>
          </WindowButton>
          <WindowButton $w={47} $close aria-label="Close"><Cross color="#fff" size={10} /></WindowButton>
        </WindowButtons>
      </TitleBar>

      <Tabs aria-label="Ribbon tabs">
        <RibbonTab $w={54} $active>Home</RibbonTab>
        <RibbonTab $w={65}>Create</RibbonTab>
        <RibbonTab $w={96}>External Data</RibbonTab>
        <RibbonTab $w={110}>Database Tools</RibbonTab>
        <RibbonTab $w={81} $context>Datasheet</RibbonTab>
        <HelpButton aria-label="Help"><HelpIcon /></HelpButton>
      </Tabs>

      <RibbonGroups />

      <MessageStrip>
        <MessageBar role="alert">
          <ShieldIcon />
          <strong>Security Warning</strong>
          <span>Certain content in the database has been disabled</span>
          <OptionsButton>Options...</OptionsButton>
        </MessageBar>
        <CloseMessage aria-label="Dismiss warning"><Cross color="#6f7885" size={9} /></CloseMessage>
      </MessageStrip>

      <Workspace>
        <NavPane>
          <NavHead>
            <h2>Tables</h2>
            <button aria-label="Choose group">
              <svg width="14" height="14" viewBox="0 0 14 14"><circle cx="7" cy="7" r="6.500" fill="#d9e8fc" stroke="#a9c0e0" /><path d="M3.500 5.500h7L7 9.500z" fill={ink} /></svg>
            </button>
            <CollapseButton aria-label="Collapse pane">
              <svg width="9" height="8" viewBox="0 0 9 8" fill="none" stroke="#33599b"><path d="M4 .5L.8 4 4 7.500M8.200.5L5 4l3.200 3.500" /></svg>
            </CollapseButton>
          </NavHead>
          <NavList>
            {tables.map((t, i) => (
              <li key={t}><NavItem $on={i === 0}><SheetIcon />{t}</NavItem></li>
            ))}
          </NavList>
        </NavPane>
        <Document>
          <DocTabs>
            {openTabs.map((t, i) => (
              <DocTab key={t} $on={i === 0} $z={openTabs.length - i}><SheetIcon />{t}</DocTab>
            ))}
            <CloseDoc aria-label="Close table"><Cross color="#000" size={9} /></CloseDoc>
          </DocTabs>
          <Datasheet />
          <RecordBar>
            <span>Record:</span>
            <RecordStep $w={21} aria-label="First record"><StepIcon kind="first" /></RecordStep>
            <RecordStep $w={14} aria-label="Previous record"><StepIcon kind="prev" /></RecordStep>
            <RecordField $w={50} aria-label="Current record" defaultValue="1 of 6" />
            <RecordStep $w={22} aria-label="Next record"><StepIcon kind="next" /></RecordStep>
            <RecordStep $w={14} aria-label="Last record"><StepIcon kind="last" /></RecordStep>
            <RecordStep $w={18} aria-label="New record"><StepIcon kind="new" /></RecordStep>
            <FilterState disabled><MiniFunnel mark="cross" />No Filter</FilterState>
            <RecordField $w={70} aria-label="Search" placeholder="Search" />
          </RecordBar>
        </Document>
      </Workspace>

      <StatusBar>
        <StatusText>Datasheet View</StatusText>
        <StatusPane />
        <ViewSwitch>
          {["Datasheet", "PivotTable", "PivotChart", "Design"].map((v, i) => (
            <ViewButton key={v} $on={i === 0} aria-label={`${v} view`}><ViewGlyph kind={i} /></ViewButton>
          ))}
        </ViewSwitch>
      </StatusBar>
    </Window>
  );
}
